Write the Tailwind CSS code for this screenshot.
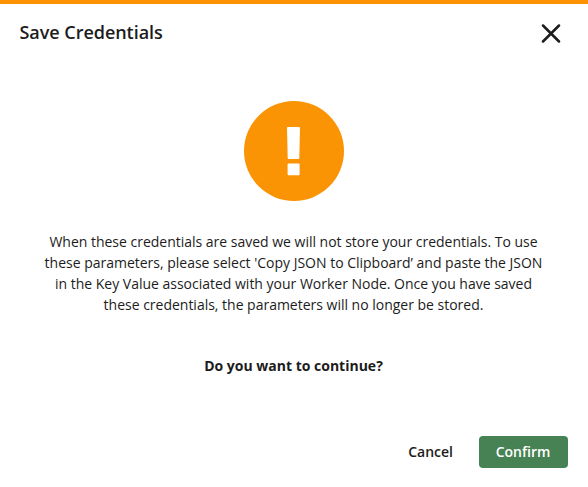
<!DOCTYPE html>
<html lang="en">
<head>
<meta charset="utf-8">
<title>Save Credentials</title>
<script src="https://cdn.jsdelivr.net/npm/@tailwindcss/browser@4"></script>
</head>
<body class="bg-white">
<div class="flex h-[487px] w-[588px] flex-col overflow-hidden border-t-4 border-[#fd9304] bg-white font-['Open_Sans',sans-serif] text-[#1c1c1c]">
  <header class="flex items-start justify-between pl-[19.5px] pr-[27px] pt-4">
    <h1 class="text-[18px] leading-[25px] font-semibold tracking-[-0.04px]">Save Credentials</h1>
    <button aria-label="Close" class="mt-1"><svg class="block h-5 w-5" viewBox="0 0 20 20" fill="none" stroke="#1c1c1c" stroke-width="2.5" stroke-linecap="round"><path d="M2 1.500L18 17.500M18 1.500L2 17.500"/></svg></button>
  </header>
  <main class="flex flex-1 flex-col items-center pt-14">
    <svg class="block h-[100px] w-[100px]" viewBox="0 0 100 100"><circle cx="50" cy="50" r="50" fill="#fb9404"/><path d="M43.700 26H55.100Q56 26 56 27L55.300 57Q55.300 58 54.300 58H44.700Q43.700 58 43.700 57L43 27Q43 26 43.700 26Z" fill="#fff"/><rect x="43.600" y="62.600" width="12" height="11.700" rx="1" fill="#fff"/></svg>
    <p class="mt-[30px] pr-px text-center text-[14px] leading-[21px] tracking-[-0.01px] whitespace-nowrap">When these credentials are saved we will not store your credentials. To use<br>these parameters, please select 'Copy JSON to Clipboard’ and paste the JSON<br>in the Key Value associated with your Worker Node. Once you have saved<br>these credentials, the parameters will no longer be stored.</p>
    <p class="mt-10 pr-px text-[14px] leading-[21px] font-bold">Do you want to continue?</p>
  </main>
  <footer class="flex items-center justify-end gap-[26px] pr-5 pb-[19px] text-[14px] font-semibold">
    <button class="pb-0.5">Cancel</button>
    <button class="h-8 w-[89px] rounded bg-[#468254] pr-px pb-0.5 text-white">Confirm</button>
  </footer>
</div>
</body>
</html>
